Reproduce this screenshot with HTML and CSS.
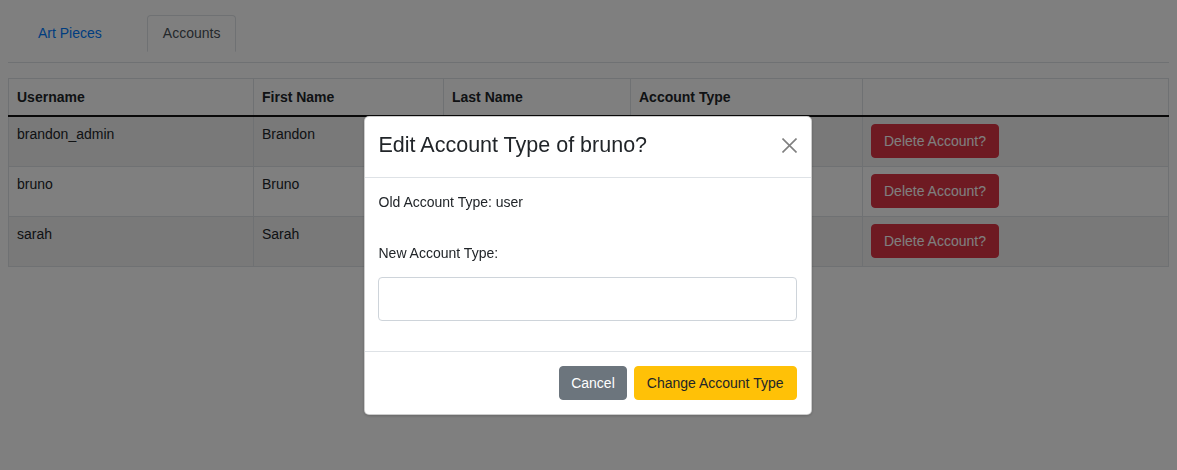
FILE: index.html
```html
<!DOCTYPE html>
<html lang="en">
<head>
<meta charset="utf-8">
<title>Accounts</title>
<link rel="stylesheet" href="styles.css">
</head>
<body>
<div class="page">
  <nav class="tabs">
    <a class="tab" href="#">Art Pieces</a>
    <a class="tab active" href="#">Accounts</a>
  </nav>
  <div class="divider"></div>
  <table class="accounts">
    <colgroup>
      <col class="c1"><col class="c2"><col class="c3"><col class="c4"><col class="c5">
    </colgroup>
    <thead>
      <tr><th>Username</th><th>First Name</th><th>Last Name</th><th>Account Type</th><th></th></tr>
    </thead>
    <tbody>
      <tr><td>brandon_admin</td><td>Brandon</td><td></td><td></td><td><button class="btn btn-danger">Delete Account?</button></td></tr>
      <tr><td>bruno</td><td>Bruno</td><td></td><td></td><td><button class="btn btn-danger">Delete Account?</button></td></tr>
      <tr><td>sarah</td><td>Sarah</td><td></td><td></td><td><button class="btn btn-danger">Delete Account?</button></td></tr>
    </tbody>
  </table>
</div>
<div class="backdrop">
  <div class="modal">
    <div class="modal-header">
      <h5 class="modal-title">Edit Account Type of bruno?</h5>
      <button class="close" aria-label="Close">
        <svg width="15" height="15" viewBox="0 0 15 15"><path d="M0.5 0.5 L14.5 14.5 M14.5 0.5 L0.5 14.5" stroke="#808080" stroke-width="1.6" fill="none"/></svg>
      </button>
    </div>
    <div class="modal-body">
      <p class="old">Old Account Type: user</p>
      <label class="new-label">New Account Type:</label>
      <input class="field" type="text">
    </div>
    <div class="modal-footer">
      <button class="btn btn-secondary">Cancel</button>
      <button class="btn btn-warning">Change Account Type</button>
    </div>
  </div>
</div>
</body>
</html>
```
FILE: styles.css
```css
html, body {
  margin: 0;
  padding: 0;
}
body {
  margin: 8px;
  font-family: "Liberation Sans", Arial, sans-serif;
  font-size: 14px;
  color: #212529;
  background: #fff;
}
.page {
  padding-top: 7px;
}
.tabs {
  display: flex;
}
.tab {
  display: block;
  margin: 0 15px 0 14px;
  padding: 7px 15px;
  line-height: 21px;
  border: 1px solid transparent;
  border-radius: 4px 4px 0 0;
  color: #007bff;
  text-decoration: none;
}
.tab.active {
  color: #495057;
  background: #fff;
  border-color: #dee2e6 #dee2e6 transparent;
}
.divider {
  margin-top: 10px;
  border-top: 1px solid #dee2e6;
}
.accounts {
  margin-top: 15px;
  width: 100%;
  table-layout: fixed;
  border-collapse: collapse;
  border: 1px solid #dee2e6;
}
.c1 { width: 245px; }
.c2 { width: 190px; }
.c3 { width: 187px; }
.c4 { width: 232px; }
.c5 { width: auto; }
.accounts th {
  text-align: left;
  font-weight: bold;
  padding: 8px 8px 8px;
  line-height: 20px;
  border: 1px solid #dee2e6;
  border-bottom: 2px solid #111;
  vertical-align: top;
}
.accounts td {
  padding: 7px 8px 8px;
  line-height: 20px;
  border: 1px solid #dee2e6;
  vertical-align: top;
}
.accounts tbody tr:nth-child(odd) {
  background: rgba(0, 0, 0, 0.05);
}
.btn {
  display: inline-block;
  font-family: "Liberation Sans", Arial, sans-serif;
  font-size: 14px;
  line-height: 20px;
  padding: 6px 12px;
  border: 1px solid transparent;
  border-radius: 4px;
  cursor: pointer;
}
.btn-danger {
  background: #dc3545;
  border-color: #dc3545;
  color: #fff;
}
.btn-secondary {
  background: #6c757d;
  border-color: #6c757d;
  color: #fff;
  padding: 6px 11px;
}
.btn-warning {
  background: #ffc107;
  border-color: #ffc107;
  color: #212529;
}
.backdrop {
  position: fixed;
  inset: 0;
  background: rgba(0, 0, 0, 0.5);
  overflow: hidden;
}
.modal {
  width: 448px;
  box-sizing: border-box;
  margin: 116px 0 0 calc(50% - 225px);
  background: #fff;
  border: 1px solid rgba(0, 0, 0, 0.2);
  border-radius: 5px;
  box-shadow: 0 1px 3px rgba(0, 0, 0, 0.2);
}
.modal-header {
  display: flex;
  align-items: center;
  justify-content: space-between;
  padding: 14px 14px 18px 14px;
  border-bottom: 1px solid #dee2e6;
}
.modal-title {
  margin: 0;
  font-size: 21.5px;
  font-weight: normal;
  line-height: 28px;
  color: #212529;
}
.close {
  display: flex;
  padding: 0;
  margin: 0;
  border: 0;
  background: none;
  width: 15px;
  height: 15px;
}
.modal-body {
  padding: 14px 14px 15px 14px;
  display: flex;
  flex-direction: column;
}
.old {
  margin: 0 0 31px;
  line-height: 20px;
}
.new-label {
  line-height: 20px;
  margin-bottom: 14px;
}
.field {
  box-sizing: border-box;
  height: 44px;
  width: calc(100% + 1px);
  margin: 0 0 15px -1px;
  border: 1px solid #ced4da;
  border-radius: 4px;
  background: #fff;
}
.modal-footer {
  display: flex;
  justify-content: flex-end;
  gap: 7px;
  padding: 14px 14px 14px;
  border-top: 1px solid #dee2e6;
}
```
